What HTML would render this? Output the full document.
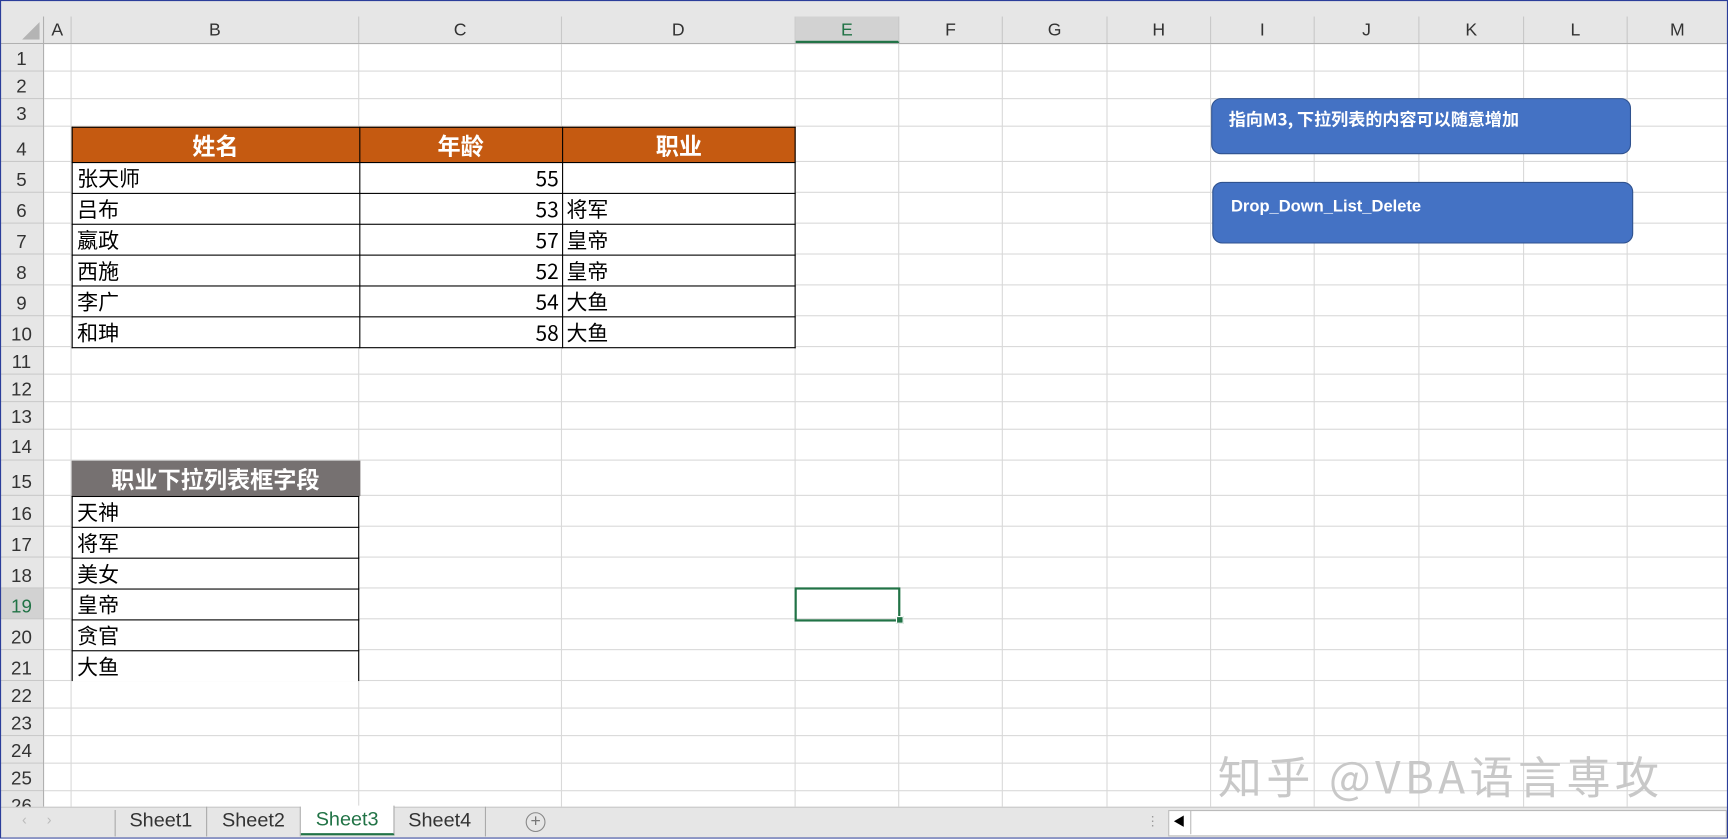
<!DOCTYPE html>
<html><head><meta charset="utf-8"><style>
html,body{margin:0;padding:0;width:1728px;height:839px;overflow:hidden;background:#fff}
#w{position:absolute;left:0;top:0;width:1568px;height:761px;transform:scale(1.10204);transform-origin:0 0;background:#fff;font-family:"Liberation Sans","Noto Sans CJK SC",sans-serif;overflow:hidden}
.a{position:absolute}
.h{position:absolute;height:1px;background:#d9d9d9;left:40px;right:0}
.v{position:absolute;width:1px;background:#d9d9d9;top:40px;height:692px}
.ch{position:absolute;top:15px;height:24px;line-height:26px;text-align:center;font-size:16px;color:#333;border-right:1px solid #c8c8c8}
.rh{position:absolute;left:0;width:39px;text-align:center;font-size:17px;color:#333;border-bottom:1px solid #c8c8c8;background:#e6e6e6}
.t{position:absolute;font-size:19px;color:#000;line-height:28px;font-family:"Noto Sans CJK SC","Liberation Sans",sans-serif}
.bk{position:absolute;background:#000}
.tab{position:absolute;top:732px;height:27px;line-height:25px;font-size:18px;color:#333;text-align:center;border-right:1px solid #aaa}
</style></head><body><div id="w">
<div class="a" style="left:0;top:0;width:1568px;height:40px;background:#e6e6e6"></div>
<div class="a" style="left:0;top:0;width:40px;height:732px;background:#e6e6e6"></div>
<div class="a" style="left:0;top:39px;width:1568px;height:1px;background:#b0b0b0"></div>
<div class="a" style="left:39px;top:15px;width:1px;height:717px;background:#b0b0b0"></div>
<svg class="a" style="left:20px;top:20px" width="16" height="16"><polygon points="16,0 16,16 0,16" fill="#b4b4b4"/></svg>
<div class="ch" style="left:40px;width:24px">A</div>
<div class="ch" style="left:65px;width:260px">B</div>
<div class="ch" style="left:326px;width:183px">C</div>
<div class="ch" style="left:510px;width:211px">D</div>
<div class="ch" style="left:722px;width:93px;background:#d2d2d2;color:#217346;border-bottom:2px solid #217346;height:22px">E</div>
<div class="ch" style="left:816px;width:93px">F</div>
<div class="ch" style="left:910px;width:94px">G</div>
<div class="ch" style="left:1005px;width:93px">H</div>
<div class="ch" style="left:1099px;width:93px">I</div>
<div class="ch" style="left:1193px;width:94px">J</div>
<div class="ch" style="left:1288px;width:94px">K</div>
<div class="ch" style="left:1383px;width:93px">L</div>
<div class="ch" style="left:1477px;width:90px">M</div>

<div class="rh" style="top:40px;height:24px;line-height:28px">1</div>
<div class="rh" style="top:65px;height:24px;line-height:28px">2</div>
<div class="rh" style="top:90px;height:24px;line-height:28px">3</div>
<div class="rh" style="top:115px;height:31px;line-height:42px">4</div>
<div class="rh" style="top:147px;height:27px;line-height:34px">5</div>
<div class="rh" style="top:175px;height:27px;line-height:34px">6</div>
<div class="rh" style="top:203px;height:27px;line-height:34px">7</div>
<div class="rh" style="top:231px;height:27px;line-height:34px">8</div>
<div class="rh" style="top:259px;height:27px;line-height:34px">9</div>
<div class="rh" style="top:287px;height:27px;line-height:34px">10</div>
<div class="rh" style="top:315px;height:24px;line-height:28px">11</div>
<div class="rh" style="top:340px;height:24px;line-height:28px">12</div>
<div class="rh" style="top:365px;height:24px;line-height:28px">13</div>
<div class="rh" style="top:390px;height:27px;line-height:32px">14</div>
<div class="rh" style="top:418px;height:31px;line-height:40px">15</div>
<div class="rh" style="top:450px;height:27px;line-height:34px">16</div>
<div class="rh" style="top:478px;height:27px;line-height:34px">17</div>
<div class="rh" style="top:506px;height:27px;line-height:34px">18</div>
<div class="rh" style="top:534px;height:27px;line-height:34px;background:#d2d2d2;color:#217346">19</div>
<div class="rh" style="top:562px;height:27px;line-height:34px">20</div>
<div class="rh" style="top:590px;height:27px;line-height:34px">21</div>
<div class="rh" style="top:618px;height:24px;line-height:28px">22</div>
<div class="rh" style="top:643px;height:24px;line-height:28px">23</div>
<div class="rh" style="top:668px;height:24px;line-height:28px">24</div>
<div class="rh" style="top:693px;height:24px;line-height:28px">25</div>
<div class="rh" style="top:718px;height:14px;line-height:28px;overflow:hidden;border:0">26</div>

<div class="h" style="top:64px"></div><div class="h" style="top:89px"></div><div class="h" style="top:114px"></div>
<div class="h" style="top:146px"></div><div class="h" style="top:174px"></div><div class="h" style="top:202px"></div>
<div class="h" style="top:230px"></div><div class="h" style="top:258px"></div><div class="h" style="top:286px"></div>
<div class="h" style="top:314px"></div><div class="h" style="top:339px"></div><div class="h" style="top:364px"></div>
<div class="h" style="top:389px"></div><div class="h" style="top:417px"></div><div class="h" style="top:449px"></div>
<div class="h" style="top:477px"></div><div class="h" style="top:505px"></div><div class="h" style="top:533px"></div>
<div class="h" style="top:561px"></div><div class="h" style="top:589px"></div><div class="h" style="top:617px"></div>
<div class="h" style="top:642px"></div><div class="h" style="top:667px"></div><div class="h" style="top:692px"></div>
<div class="h" style="top:717px"></div>
<div class="v" style="left:64px"></div><div class="v" style="left:325px"></div><div class="v" style="left:509px"></div>
<div class="v" style="left:721px"></div><div class="v" style="left:815px"></div><div class="v" style="left:909px"></div>
<div class="v" style="left:1004px"></div><div class="v" style="left:1098px"></div><div class="v" style="left:1192px"></div>
<div class="v" style="left:1287px"></div><div class="v" style="left:1382px"></div><div class="v" style="left:1476px"></div>

<!-- table 1 -->
<div class="a" style="left:65px;top:115px;width:657px;height:32px;background:#c55a11"></div>
<div class="a" style="left:65px;top:147px;width:657px;height:168px;background:#fff"></div>
<div class="bk" style="left:65px;top:115px;width:657px;height:1px"></div>
<div class="bk" style="left:65px;top:147px;width:657px;height:1px"></div>
<div class="bk" style="left:65px;top:175px;width:657px;height:1px"></div>
<div class="bk" style="left:65px;top:203px;width:657px;height:1px"></div>
<div class="bk" style="left:65px;top:231px;width:657px;height:1px"></div>
<div class="bk" style="left:65px;top:259px;width:657px;height:1px"></div>
<div class="bk" style="left:65px;top:287px;width:657px;height:1px"></div>
<div class="bk" style="left:65px;top:315px;width:657px;height:1px"></div>
<div class="bk" style="left:65px;top:115px;width:1px;height:201px"></div>
<div class="bk" style="left:326px;top:115px;width:1px;height:201px"></div>
<div class="bk" style="left:510px;top:115px;width:1px;height:201px"></div>
<div class="bk" style="left:721px;top:115px;width:1px;height:201px"></div>
<div class="t" style="left:65px;top:118px;width:261px;text-align:center;color:#fff;font-weight:bold;font-size:21px">姓名</div>
<div class="t" style="left:326px;top:118px;width:184px;text-align:center;color:#fff;font-weight:bold;font-size:21px">年龄</div>
<div class="t" style="left:510px;top:118px;width:212px;text-align:center;color:#fff;font-weight:bold;font-size:21px">职业</div>
<div class="t" style="left:70px;top:148px">张天师</div><div class="t" style="left:326px;width:181px;text-align:right;top:148px">55</div>
<div class="t" style="left:70px;top:176px">吕布</div><div class="t" style="left:326px;width:181px;text-align:right;top:176px">53</div><div class="t" style="left:514px;top:176px">将军</div>
<div class="t" style="left:70px;top:204px">嬴政</div><div class="t" style="left:326px;width:181px;text-align:right;top:204px">57</div><div class="t" style="left:514px;top:204px">皇帝</div>
<div class="t" style="left:70px;top:232px">西施</div><div class="t" style="left:326px;width:181px;text-align:right;top:232px">52</div><div class="t" style="left:514px;top:232px">皇帝</div>
<div class="t" style="left:70px;top:260px">李广</div><div class="t" style="left:326px;width:181px;text-align:right;top:260px">54</div><div class="t" style="left:514px;top:260px">大鱼</div>
<div class="t" style="left:70px;top:288px">和珅</div><div class="t" style="left:326px;width:181px;text-align:right;top:288px">58</div><div class="t" style="left:514px;top:288px">大鱼</div>

<!-- table 2 -->
<div class="a" style="left:65px;top:418px;width:262px;height:32px;background:#767171"></div>
<div class="a" style="left:65px;top:451px;width:261px;height:167px;background:#fff"></div>
<div class="bk" style="left:65px;top:450px;width:261px;height:1px"></div>
<div class="bk" style="left:65px;top:478px;width:261px;height:1px"></div>
<div class="bk" style="left:65px;top:506px;width:261px;height:1px"></div>
<div class="bk" style="left:65px;top:534px;width:261px;height:1px"></div>
<div class="bk" style="left:65px;top:562px;width:261px;height:1px"></div>
<div class="bk" style="left:65px;top:590px;width:261px;height:1px"></div>
<div class="bk" style="left:65px;top:450px;width:1px;height:168px"></div>
<div class="bk" style="left:325px;top:450px;width:1px;height:168px"></div>
<div class="t" style="left:65px;top:421px;width:261px;text-align:center;color:#fff;font-weight:bold;font-size:21px">职业下拉列表框字段</div>
<div class="t" style="left:70px;top:451px">天神</div>
<div class="t" style="left:70px;top:479px">将军</div>
<div class="t" style="left:70px;top:507px">美女</div>
<div class="t" style="left:70px;top:535px">皇帝</div>
<div class="t" style="left:70px;top:563px">贪官</div>
<div class="t" style="left:70px;top:591px">大鱼</div>

<div class="a" style="left:721px;top:533px;width:92px;height:27px;border:2px solid #217346"></div>
<div class="a" style="left:813px;top:559px;width:5px;height:5px;background:#217346;border:1px solid #fff"></div>

<div class="a" style="left:1099px;top:89px;background:#4472c4;border:1.5px solid #2f528f;border-radius:9px;color:#fff;font-weight:bold;font-size:15.5px;line-height:36px;padding-left:15px;box-sizing:border-box;width:381px;height:51px;font-family:'Noto Sans CJK SC','Liberation Sans',sans-serif">指向M3, 下拉列表的内容可以随意增加</div>
<div class="a" style="left:1100px;top:165px;width:382px;height:56px;background:#4472c4;border:1.5px solid #2f528f;border-radius:9px;color:#fff;font-weight:bold;font-size:15px;line-height:44px;padding-left:16px;box-sizing:border-box">Drop_Down_List_Delete</div>

<div class="a" style="left:1105px;top:674px;font-size:40px;color:#c8c8c8;font-family:'Noto Sans CJK SC','Liberation Sans',sans-serif;white-space:nowrap;letter-spacing:4px">知乎 @VBA语言専攻</div>

<!-- tabs bar -->
<div class="a" style="left:0;top:732px;width:1568px;height:29px;background:#e6e6e6;border-top:1px solid #c8c8c8"></div>
<div class="a" style="left:20px;top:736px;font-size:13px;color:#bbb">&#x2039;&nbsp;&nbsp;&nbsp;&nbsp;&nbsp;&#x203A;</div>
<div class="a" style="left:104px;top:735px;width:1px;height:24px;background:#aaa"></div>
<div class="tab" style="left:105px;width:82px">Sheet1</div>
<div class="tab" style="left:188px;width:84px">Sheet2</div>
<div class="tab" style="left:273px;width:84px;background:#fff;color:#217346;border-bottom:2px solid #217346;height:25px;top:731px">Sheet3</div>
<div class="tab" style="left:358px;width:82px">Sheet4</div>
<div class="a" style="left:477px;top:737px;width:16px;height:16px;border:1px solid #888;border-radius:50%;text-align:center;line-height:16px;font-size:16px;color:#777">+</div>
<div class="a" style="left:1040px;top:738px;font-size:12px;color:#999">&#8942;</div>
<div class="a" style="left:1060px;top:735px;width:505px;height:22px;background:#fff;border:1px solid #bbb"></div>
<div class="a" style="left:1060px;top:735px;width:20px;height:22px;border-right:1px solid #bbb;font-size:11px;line-height:22px;text-align:center">&#9664;</div>
<div class="a" style="left:0;top:0;width:1566px;height:759px;border:1px solid #2b3e9a;pointer-events:none"></div>
</div></body></html>
